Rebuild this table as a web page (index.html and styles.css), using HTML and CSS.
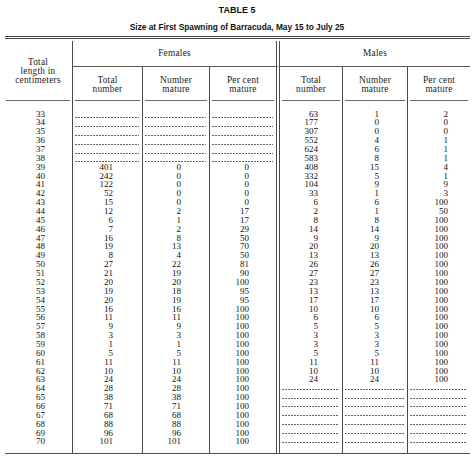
FILE: index.html
```html
<!DOCTYPE html>
<html>
<head>
<meta charset="utf-8">
<link rel="stylesheet" href="styles.css">
</head>
<body>
<div class="title">TABLE 5</div>
<div class="subtitle">Size at First Spawning of Barracuda, May 15 to July 25</div>
<div class="sheet">
<div class="toprule"></div>
<table>
<colgroup>
<col class="w1"><col class="w2"><col class="w3"><col class="w4"><col class="w5"><col class="w6"><col class="w7">
</colgroup>
<thead>
<tr>
<th rowspan="2" class="lenh"><div class="lh">Total<br>length in<br>centimeters</div></th>
<th colspan="3" class="grp">Females</th>
<th colspan="3" class="grp males">Males</th>
</tr>
<tr>
<th class="sub"><div class="sh">Total<br>number</div></th>
<th class="sub"><div class="sh">Number<br>mature</div></th>
<th class="sub"><div class="sh">Per cent<br>mature</div></th>
<th class="sub males"><div class="sh">Total<br>number</div></th>
<th class="sub"><div class="sh">Number<br>mature</div></th>
<th class="sub"><div class="sh">Per cent<br>mature</div></th>
</tr>
</thead>
<tbody>
<tr class="first"><td class="c1">33</td><td class="c2 dash"><span class="lead lf"></span></td><td class="c3 dash"><span class="lead lf"></span></td><td class="c4 dash"><span class="lead lf"></span></td><td class="c5">63</td><td class="c6">1</td><td class="c7">2</td></tr>
<tr><td class="c1">34</td><td class="c2 dash"><span class="lead lf"></span></td><td class="c3 dash"><span class="lead lf"></span></td><td class="c4 dash"><span class="lead lf"></span></td><td class="c5">177</td><td class="c6">0</td><td class="c7">0</td></tr>
<tr><td class="c1">35</td><td class="c2 dash"><span class="lead lf"></span></td><td class="c3 dash"><span class="lead lf"></span></td><td class="c4 dash"><span class="lead lf"></span></td><td class="c5">307</td><td class="c6">0</td><td class="c7">0</td></tr>
<tr><td class="c1">36</td><td class="c2 dash"><span class="lead lf"></span></td><td class="c3 dash"><span class="lead lf"></span></td><td class="c4 dash"><span class="lead lf"></span></td><td class="c5">552</td><td class="c6">4</td><td class="c7">1</td></tr>
<tr><td class="c1">37</td><td class="c2 dash"><span class="lead lf"></span></td><td class="c3 dash"><span class="lead lf"></span></td><td class="c4 dash"><span class="lead lf"></span></td><td class="c5">624</td><td class="c6">6</td><td class="c7">1</td></tr>
<tr><td class="c1">38</td><td class="c2 dash"><span class="lead lf"></span></td><td class="c3 dash"><span class="lead lf"></span></td><td class="c4 dash"><span class="lead lf"></span></td><td class="c5">583</td><td class="c6">8</td><td class="c7">1</td></tr>
<tr><td class="c1">39</td><td class="c2">401</td><td class="c3">0</td><td class="c4">0</td><td class="c5">408</td><td class="c6">15</td><td class="c7">4</td></tr>
<tr><td class="c1">40</td><td class="c2">242</td><td class="c3">0</td><td class="c4">0</td><td class="c5">332</td><td class="c6">5</td><td class="c7">1</td></tr>
<tr><td class="c1">41</td><td class="c2">122</td><td class="c3">0</td><td class="c4">0</td><td class="c5">104</td><td class="c6">9</td><td class="c7">9</td></tr>
<tr><td class="c1">42</td><td class="c2">52</td><td class="c3">0</td><td class="c4">0</td><td class="c5">33</td><td class="c6">1</td><td class="c7">3</td></tr>
<tr><td class="c1">43</td><td class="c2">15</td><td class="c3">0</td><td class="c4">0</td><td class="c5">6</td><td class="c6">6</td><td class="c7">100</td></tr>
<tr><td class="c1">44</td><td class="c2">12</td><td class="c3">2</td><td class="c4">17</td><td class="c5">2</td><td class="c6">1</td><td class="c7">50</td></tr>
<tr><td class="c1">45</td><td class="c2">6</td><td class="c3">1</td><td class="c4">17</td><td class="c5">8</td><td class="c6">8</td><td class="c7">100</td></tr>
<tr><td class="c1">46</td><td class="c2">7</td><td class="c3">2</td><td class="c4">29</td><td class="c5">14</td><td class="c6">14</td><td class="c7">100</td></tr>
<tr><td class="c1">47</td><td class="c2">16</td><td class="c3">8</td><td class="c4">50</td><td class="c5">9</td><td class="c6">9</td><td class="c7">100</td></tr>
<tr><td class="c1">48</td><td class="c2">19</td><td class="c3">13</td><td class="c4">70</td><td class="c5">20</td><td class="c6">20</td><td class="c7">100</td></tr>
<tr><td class="c1">49</td><td class="c2">8</td><td class="c3">4</td><td class="c4">50</td><td class="c5">13</td><td class="c6">13</td><td class="c7">100</td></tr>
<tr><td class="c1">50</td><td class="c2">27</td><td class="c3">22</td><td class="c4">81</td><td class="c5">26</td><td class="c6">26</td><td class="c7">100</td></tr>
<tr><td class="c1">51</td><td class="c2">21</td><td class="c3">19</td><td class="c4">90</td><td class="c5">27</td><td class="c6">27</td><td class="c7">100</td></tr>
<tr><td class="c1">52</td><td class="c2">20</td><td class="c3">20</td><td class="c4">100</td><td class="c5">23</td><td class="c6">23</td><td class="c7">100</td></tr>
<tr><td class="c1">53</td><td class="c2">19</td><td class="c3">18</td><td class="c4">95</td><td class="c5">13</td><td class="c6">13</td><td class="c7">100</td></tr>
<tr><td class="c1">54</td><td class="c2">20</td><td class="c3">19</td><td class="c4">95</td><td class="c5">17</td><td class="c6">17</td><td class="c7">100</td></tr>
<tr><td class="c1">55</td><td class="c2">16</td><td class="c3">16</td><td class="c4">100</td><td class="c5">10</td><td class="c6">10</td><td class="c7">100</td></tr>
<tr><td class="c1">56</td><td class="c2">11</td><td class="c3">11</td><td class="c4">100</td><td class="c5">6</td><td class="c6">6</td><td class="c7">100</td></tr>
<tr><td class="c1">57</td><td class="c2">9</td><td class="c3">9</td><td class="c4">100</td><td class="c5">5</td><td class="c6">5</td><td class="c7">100</td></tr>
<tr><td class="c1">58</td><td class="c2">3</td><td class="c3">3</td><td class="c4">100</td><td class="c5">3</td><td class="c6">3</td><td class="c7">100</td></tr>
<tr><td class="c1">59</td><td class="c2">1</td><td class="c3">1</td><td class="c4">100</td><td class="c5">3</td><td class="c6">3</td><td class="c7">100</td></tr>
<tr><td class="c1">60</td><td class="c2">5</td><td class="c3">5</td><td class="c4">100</td><td class="c5">5</td><td class="c6">5</td><td class="c7">100</td></tr>
<tr><td class="c1">61</td><td class="c2">11</td><td class="c3">11</td><td class="c4">100</td><td class="c5">11</td><td class="c6">11</td><td class="c7">100</td></tr>
<tr><td class="c1">62</td><td class="c2">10</td><td class="c3">10</td><td class="c4">100</td><td class="c5">10</td><td class="c6">10</td><td class="c7">100</td></tr>
<tr><td class="c1">63</td><td class="c2">24</td><td class="c3">24</td><td class="c4">100</td><td class="c5">24</td><td class="c6">24</td><td class="c7">100</td></tr>
<tr><td class="c1">64</td><td class="c2">28</td><td class="c3">28</td><td class="c4">100</td><td class="c5 dash"><span class="lead lm"></span></td><td class="c6 dash"><span class="lead lm"></span></td><td class="c7 dash"><span class="lead lm"></span></td></tr>
<tr><td class="c1">65</td><td class="c2">38</td><td class="c3">38</td><td class="c4">100</td><td class="c5 dash"><span class="lead lm"></span></td><td class="c6 dash"><span class="lead lm"></span></td><td class="c7 dash"><span class="lead lm"></span></td></tr>
<tr><td class="c1">66</td><td class="c2">71</td><td class="c3">71</td><td class="c4">100</td><td class="c5 dash"><span class="lead lm"></span></td><td class="c6 dash"><span class="lead lm"></span></td><td class="c7 dash"><span class="lead lm"></span></td></tr>
<tr><td class="c1">67</td><td class="c2">68</td><td class="c3">68</td><td class="c4">100</td><td class="c5 dash"><span class="lead lm"></span></td><td class="c6 dash"><span class="lead lm"></span></td><td class="c7 dash"><span class="lead lm"></span></td></tr>
<tr><td class="c1">68</td><td class="c2">88</td><td class="c3">88</td><td class="c4">100</td><td class="c5 dash"><span class="lead lm"></span></td><td class="c6 dash"><span class="lead lm"></span></td><td class="c7 dash"><span class="lead lm"></span></td></tr>
<tr><td class="c1">69</td><td class="c2">96</td><td class="c3">96</td><td class="c4">100</td><td class="c5 dash"><span class="lead lm"></span></td><td class="c6 dash"><span class="lead lm"></span></td><td class="c7 dash"><span class="lead lm"></span></td></tr>
<tr class="last"><td class="c1">70</td><td class="c2">101</td><td class="c3">101</td><td class="c4">100</td><td class="c5 dash"><span class="lead lm"></span></td><td class="c6 dash"><span class="lead lm"></span></td><td class="c7 dash"><span class="lead lm"></span></td></tr>
</tbody>
</table>
</div>
</body>
</html>
```

FILE: styles.css
```css
html, body {
  margin: 0;
  padding: 0;
  background: #ffffff;
}

body {
  width: 474px;
  font-family: "Liberation Serif", "DejaVu Serif", serif;
  color: #111;
}

.title {
  font-family: "Liberation Sans", Arial, sans-serif;
  font-weight: bold;
  font-size: 9px;
  line-height: 9px;
  text-align: center;
  padding-top: 5.5px;
  color: #111;
}

.subtitle {
  font-family: "Liberation Sans", Arial, sans-serif;
  font-weight: bold;
  font-size: 8.3px;
  line-height: 9px;
  text-align: center;
  margin-top: 8px;
  color: #111;
}

.sheet {
  margin: 4.5px 4px 0 5px;
}

.toprule {
  height: 0;
  border-top: 3px double #4a4a4a;
  margin-bottom: 2px;
}

table {
  border-collapse: separate;
  border-spacing: 0;
  table-layout: fixed;
  width: 465px;
  border-bottom: 1px solid #505050;
}

.w1 { width: 67px; }
.w2 { width: 70px; }
.w3 { width: 67px; }
.w4 { width: 67px; }
.w5 { width: 66px; }
.w6 { width: 65px; }
.w7 { width: 63px; }

th {
  font-weight: normal;
  font-size: 9.3px;
  letter-spacing: 0.25px;
  line-height: 9px;
  color: #222;
  padding: 0;
  text-align: center;
}

.lenh {
  vertical-align: bottom;
}

.lh {
  margin: 0 2px 0 1px;
  padding: 16.5px 0 15.5px;
  border-bottom: 1px solid #6a6a6a;
}

.grp {
  border-left: 1px solid #4a4a4a;
  border-bottom: 1px solid #5a5a5a;
  padding: 8px 0;
}

.sub {
  border-left: 1px solid #4a4a4a;
  vertical-align: bottom;
}

th.males, td.c5 {
  border-left: 4px double #4a4a4a;
}

.sh {
  margin: 0 2px;
  padding: 8.5px 0 6.5px;
  border-bottom: 1px solid #6a6a6a;
}

td {
  font-size: 9px;
  line-height: 8.86px;
  padding: 0;
  text-align: right;
  vertical-align: top;
  border-left: 1px solid #4a4a4a;
  color: #111;
}

td.c1 { border-left: none; padding-right: 27px; }
td.c2 { padding-right: 29px; }
td.c3 { padding-right: 28px; }
td.c4 { padding-right: 27px; }
td.c5 { padding-right: 24px; }
td.c6 { padding-right: 28px; }
td.c7 { padding-right: 22px; }

td.dash {
  padding-right: 0;
}

tr.first td {
  padding-top: 8.6px;
}

tr.last td {
  padding-bottom: 6.7px;
}

.lead {
  display: block;
  height: 1px;
  margin: 0 3px 0 2px;
  background: repeating-linear-gradient(90deg, #666 0, #666 2px, transparent 2px, transparent 3px);
}

.lf {
  margin-top: 7.5px;
}

.lm {
  margin-top: 4.5px;
}
```
